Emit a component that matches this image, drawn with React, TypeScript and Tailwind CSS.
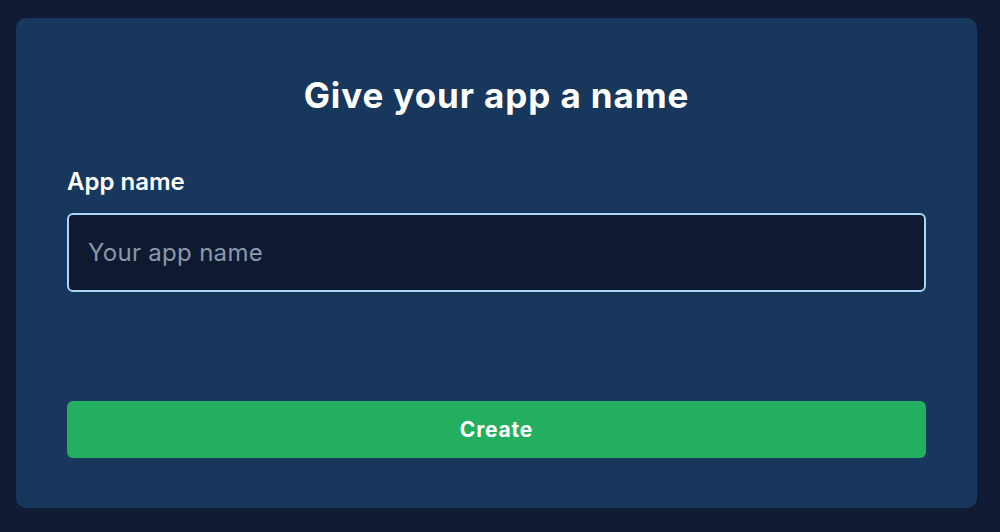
import React from "react";

export default function App() {
  return (
    <div
      className="min-h-screen w-full bg-[#111c34] pt-[18px] pl-[16px] pr-[23px] pb-[24px]"
      style={{ fontFamily: "Inter, 'Noto Sans', sans-serif" }}
    >
      <div className="flex h-[490px] flex-col rounded-[10px] bg-[#17375c] px-[51px] pt-[57px] pb-[50px]">
        <h1 className="text-center text-[35px] font-bold leading-[40px] tracking-[0.9px] text-white">
          Give your app a name
        </h1>
        <label
          htmlFor="app-name"
          className="mt-[53px] block text-[24px] font-semibold leading-[28px] text-white"
        >
          App name
        </label>
        <input
          id="app-name"
          type="text"
          placeholder="Your app name"
          className="mt-[17px] h-[79px] w-full rounded-[6px] border-2 border-[#a9d5f7] bg-[#0f1a31] px-[19px] text-[24px] tracking-[0.3px] text-white outline-none placeholder:text-[#8b97aa]"
        />
        <div className="flex-1" />
        <button
          type="button"
          className="h-[57px] w-full rounded-[6px] bg-[#24af60] text-[21px] font-bold tracking-[0.8px] text-white"
        >
          Create
        </button>
      </div>
    </div>
  );
}
